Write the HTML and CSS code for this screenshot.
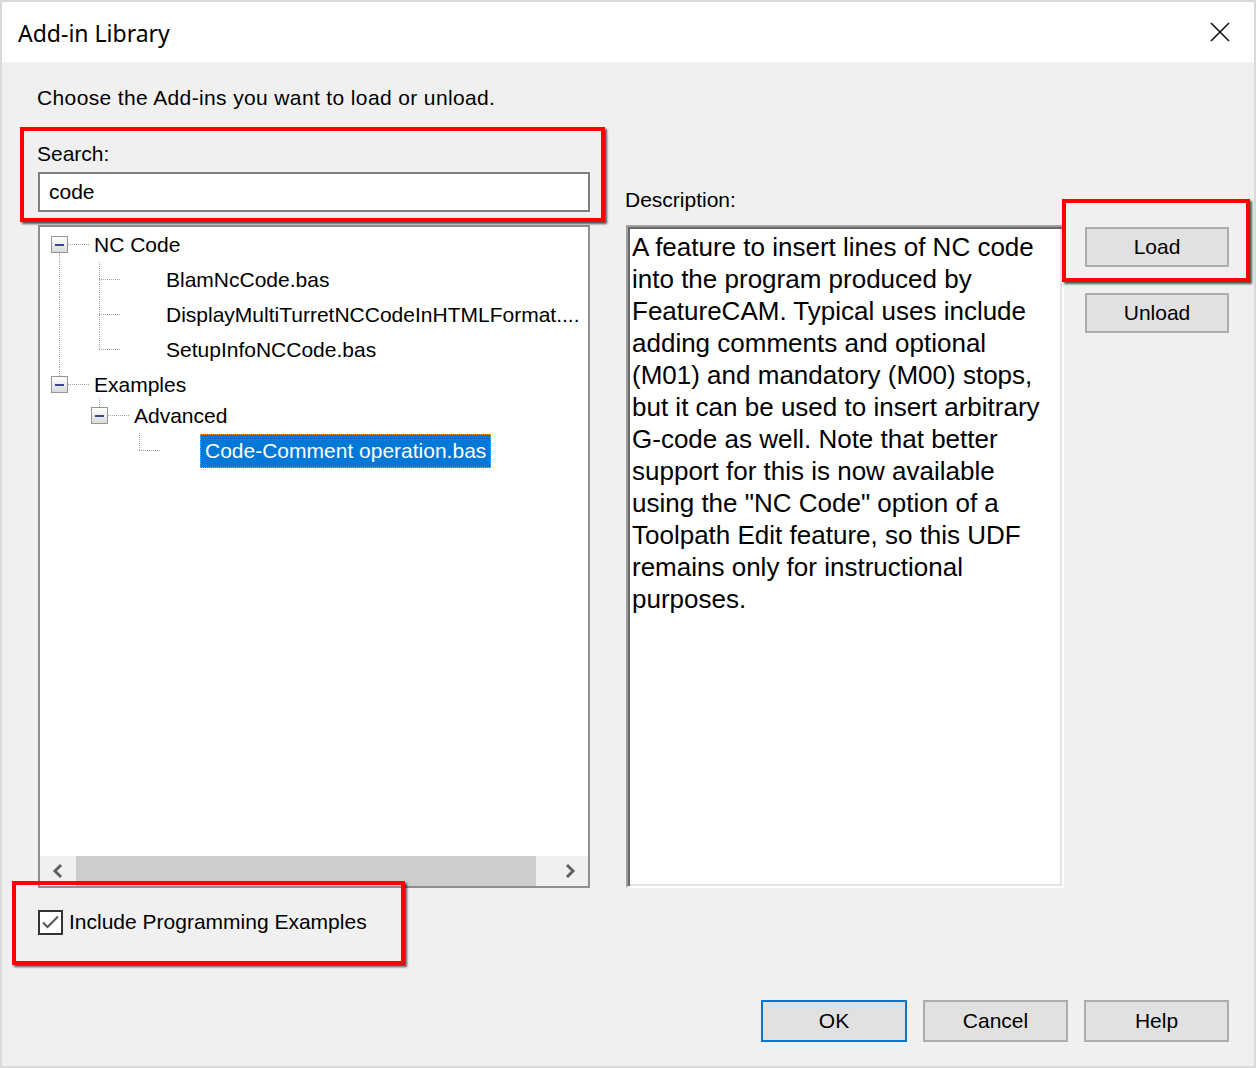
FILE: index.html
```html
<!DOCTYPE html>
<html lang="en">
<head>
    <meta charset="UTF-8">
    <title>Add-in Library</title>
    <link rel="stylesheet" href="styles.css">
</head>
<body>
    <div class="window">
        <div class="titlebar">
            <span class="title">Add-in Library</span>
            <svg class="close" width="20" height="20" viewBox="0 0 20 20">
                <path d="M1 1 L19 19 M19 1 L1 19" stroke="#111" stroke-width="1.6" fill="none"/>
            </svg>
        </div>

        <div class="content">
            <p class="intro">Choose the Add-ins you want to load or unload.</p>

            <div class="main">
                <div class="search marked">
                    <label for="search">Search:</label>
                    <input id="search" type="text" value="code">
                </div>
                <div class="descLabel">Description:</div>
                <div></div>

                <div class="tree">
                    <div class="rows">
                        <div class="row">
                            <span class="cell exp down"><span class="box"></span></span>
                            <span class="label branch">NC Code</span>
                        </div>
                        <div class="row">
                            <span class="cell pipe"></span>
                            <span class="cell tee"></span>
                            <span class="label leaf">BlamNcCode.bas</span>
                        </div>
                        <div class="row">
                            <span class="cell pipe"></span>
                            <span class="cell tee"></span>
                            <span class="label leaf">DisplayMultiTurretNCCodeInHTMLFormat....</span>
                        </div>
                        <div class="row">
                            <span class="cell pipe"></span>
                            <span class="cell elbow"></span>
                            <span class="label leaf">SetupInfoNCCode.bas</span>
                        </div>
                        <div class="row">
                            <span class="cell exp up"><span class="box"></span></span>
                            <span class="label branch">Examples</span>
                        </div>
                        <div class="row pulled">
                            <span class="cell"></span>
                            <span class="cell exp up"><span class="box"></span></span>
                            <span class="label branch">Advanced</span>
                        </div>
                        <div class="row">
                            <span class="cell"></span>
                            <span class="cell"></span>
                            <span class="cell elbow"></span>
                            <span class="label selected">Code-Comment operation.bas</span>
                        </div>
                    </div>
                    <div class="hscroll">
                        <span class="arrow">
                            <svg width="12" height="16" viewBox="0 0 12 16"><path d="M9 2 L3 8 L9 14" stroke="#606060" stroke-width="3" fill="none"/></svg>
                        </span>
                        <span class="thumb"></span>
                        <span class="track"></span>
                        <span class="arrow">
                            <svg width="12" height="16" viewBox="0 0 12 16"><path d="M3 2 L9 8 L3 14" stroke="#606060" stroke-width="3" fill="none"/></svg>
                        </span>
                    </div>
                </div>

                <div class="desc">
                    A feature to insert lines of NC code<br>
                    into the program produced by<br>
                    FeatureCAM. Typical uses include<br>
                    adding comments and optional<br>
                    (M01) and mandatory (M00) stops,<br>
                    but it can be used to insert arbitrary<br>
                    G-code as well. Note that better<br>
                    support for this is now available<br>
                    using the "NC Code" option of a<br>
                    Toolpath Edit feature, so this UDF<br>
                    remains only for instructional<br>
                    purposes.
                </div>

                <div class="sideButtons">
                    <div class="loadWrap marked">
                        <button class="btn side">Load</button>
                    </div>
                    <button class="btn side">Unload</button>
                </div>
            </div>

            <label class="include marked">
                <svg class="check" width="25" height="25" viewBox="0 0 25 25">
                    <rect x="1" y="1" width="23" height="23" fill="#fff" stroke="#333" stroke-width="2"/>
                    <path d="M5 12.5 L9.5 17 L20 6.5" stroke="#555" stroke-width="2" fill="none"/>
                </svg>
                Include Programming Examples
            </label>

            <div class="footer">
                <button class="btn default">OK</button>
                <button class="btn">Cancel</button>
                <button class="btn">Help</button>
            </div>
        </div>
    </div>
</body>
</html>
```

FILE: styles.css
```css
html, body{
    margin: 0;
    padding: 0;
    background: #f0f0f0;
}

body{
    font-family: 'Liberation Sans', Arial, sans-serif;
    font-size: 21px;
    color: #000;
}

.window{
    width: 1256px;
    height: 1068px;
    box-sizing: border-box;
    border: 2px solid #d9d9d9;
    background: #f0f0f0;
    display: flex;
    flex-direction: column;
}

.titlebar{
    height: 60px;
    background: #fff;
    display: flex;
    align-items: center;
    justify-content: space-between;
    padding: 0 24px 0 16px;
    flex: none;
}

.title{
    font-family: 'Noto Sans', 'Open Sans', sans-serif;
    font-size: 23px;
    color: #000;
    margin-top: 1px;
}

.close{
    display: block;
    margin-bottom: 1px;
}

.content{
    padding: 0 25px 0 36px;
}

.intro{
    margin: 24px 0 0 -1px;
    line-height: 24px;
    letter-spacing: 0.37px;
}

.main{
    margin-top: 32px;
    display: grid;
    grid-template-columns: 552px 474px 165px;
    grid-template-rows: auto 663px;
    row-gap: 13px;
}

.search{
    display: flex;
    flex-direction: column;
}

.search label{
    line-height: 24px;
    margin-left: -1px;
    margin-bottom: 6px;
}

.search input{
    height: 40px;
    box-sizing: border-box;
    border: 2px solid #7f7f7f;
    background: #fff;
    font-family: 'Liberation Sans', Arial, sans-serif;
    font-size: 21px;
    padding: 0 9px;
    margin: 0;
    outline: none;
}

.descLabel{
    align-self: end;
    line-height: 24px;
    margin-left: 35px;
}

/* red call-out frames drawn over the controls */
.marked{
    position: relative;
}

.marked::after{
    content: '';
    position: absolute;
    border: 4px solid #ff0000;
    box-shadow: 2px 2px 2px rgba(0, 0, 0, 0.65);
    pointer-events: none;
}

.search::after{
    top: -15px;
    right: -15px;
    bottom: -10px;
    left: -18px;
}

.loadWrap::after{
    top: -28px;
    right: -21px;
    bottom: -15px;
    left: -23px;
}

.include::after{
    top: -29px;
    right: -38px;
    bottom: -31px;
    left: -26px;
}

/* tree view */
.tree{
    border: 2px solid #8f8f8f;
    background: #fff;
    display: flex;
    flex-direction: column;
    overflow: hidden;
    --dotV: repeating-linear-gradient(to bottom, #a0a0a0 0 1px, transparent 1px 2px);
    --dotH: repeating-linear-gradient(to right, #a0a0a0 0 1px, transparent 1px 2px);
}

.rows{
    flex: 1;
    overflow: hidden;
}

.row{
    height: 35px;
    display: flex;
    white-space: nowrap;
}

.row.pulled{
    margin-top: -4px;
}

.cell{
    width: 40px;
    flex: none;
}

.pipe{
    background: var(--dotV) 19px 0 / 1px 100% no-repeat;
}

.tee{
    background: var(--dotV) 19px 0 / 1px 100% no-repeat,
                var(--dotH) 19px 50% / 21px 1px no-repeat;
}

.elbow{
    background: var(--dotV) 19px 0 / 1px 50% no-repeat,
                var(--dotH) 19px 50% / 21px 1px no-repeat;
}

.exp{
    display: flex;
    align-items: center;
}

.exp.down{
    background: var(--dotV) 19px 100% / 1px 50% no-repeat,
                var(--dotH) 28px 50% / 12px 1px no-repeat;
}

.exp.up{
    background: var(--dotV) 19px 0 / 1px 50% no-repeat,
                var(--dotH) 28px 50% / 12px 1px no-repeat;
}

.box{
    width: 17px;
    height: 17px;
    box-sizing: border-box;
    margin-left: 11px;
    border: 1px solid #959595;
    background: linear-gradient(#ffffff, #dadada);
    display: flex;
    align-items: center;
    justify-content: center;
}

.box::before{
    content: '';
    width: 9px;
    height: 2px;
    background: #35488a;
}

.label{
    display: flex;
    align-items: center;
}

.label.branch{
    padding-left: 14px;
    background: var(--dotH) 0 50% / 10px 1px no-repeat;
}

.label.leaf{
    margin-left: 46px;
}

.label.selected{
    margin-left: 40px;
    align-self: center;
    height: 34px;
    box-sizing: border-box;
    padding: 0 5px;
    background: #0078d7;
    color: #fff;
    outline: 1px dotted #ff9a2e;
    outline-offset: -1px;
}

.hscroll{
    height: 30px;
    flex: none;
    display: flex;
    background: #f0f0f0;
}

.arrow{
    width: 36px;
    display: flex;
    align-items: center;
    justify-content: center;
}

.thumb{
    width: 460px;
    background: #cdcdcd;
}

.track{
    flex: 1;
}

/* description */
.desc{
    margin-left: 36px;
    border: 2px solid;
    border-color: #a0a0a0 #ffffff #ffffff #a0a0a0;
    box-shadow: inset 2px 2px 0 #696969, inset -2px -2px 0 #e3e3e3;
    background: #fff;
    padding: 4px;
    font-size: 26px;
    line-height: 32px;
    white-space: nowrap;
    overflow: hidden;
}

.sideButtons{
    margin-left: 21px;
    padding-top: 2px;
    display: flex;
    flex-direction: column;
    gap: 26px;
}

.btn{
    height: 42px;
    box-sizing: border-box;
    border: 2px solid #adadad;
    background: #e1e1e1;
    font-family: 'Liberation Sans', Arial, sans-serif;
    font-size: 21px;
    color: #000;
    padding: 0;
    margin: 0;
}

.btn.side{
    width: 144px;
    height: 40px;
    display: block;
}

/* checkbox row */
.include{
    margin-top: 22px;
    height: 24px;
    width: fit-content;
    display: flex;
    align-items: center;
    gap: 6px;
    line-height: 24px;
}

.check{
    display: block;
    flex: none;
}

.footer{
    margin-top: 66px;
    display: flex;
    justify-content: flex-end;
    gap: 16px;
}

.footer .btn{
    width: 145px;
}

.footer .btn.default{
    width: 146px;
    border-color: #0078d7;
}
```
